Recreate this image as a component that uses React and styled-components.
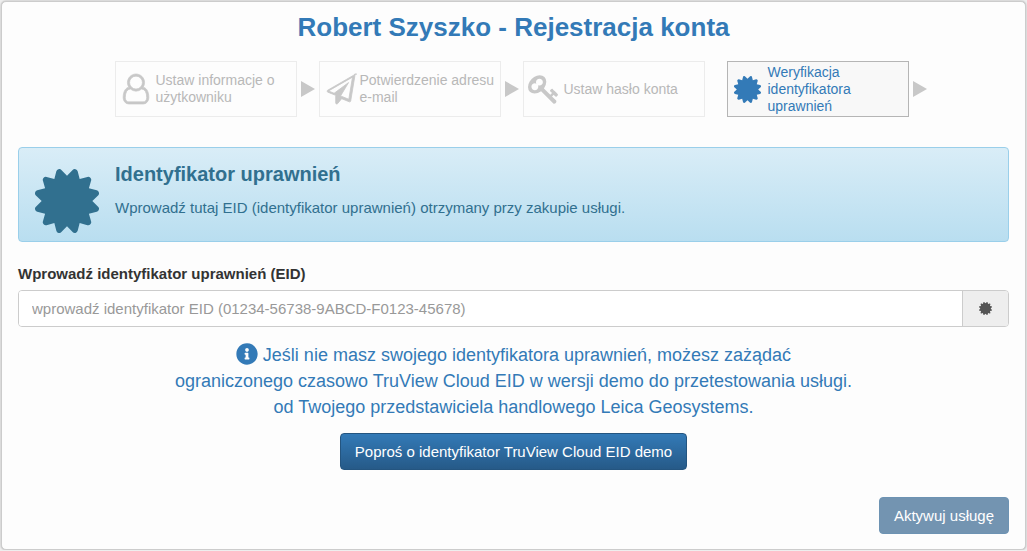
import React, { useState } from 'react';
import styled, { createGlobalStyle } from 'styled-components';
import { FaInfoCircle } from 'react-icons/fa';

const GlobalStyle = createGlobalStyle`
  * {
    box-sizing: border-box;
  }

  body {
    margin: 0;
    background: #eeeeee;
    color: #333;
    font-family: 'Liberation Sans', Arial, sans-serif;
    font-size: 15px;
    line-height: 20px;
  }
`;

const Panel = styled.main`
  margin: 1px 1px 0;
  padding: 8px 16px 15px;
  background: #fdfdfd;
  border: 1px solid #ccc;
  border-radius: 5px;
  box-shadow: 0 0 2px rgba(0, 0, 0, 0.3);
`;

const Title = styled.h1`
  margin: 0;
  color: #337ab7;
  font-size: 26px;
  line-height: 34px;
  text-align: center;
`;

const Steps = styled.ol`
  display: flex;
  justify-content: center;
  margin: 17px 0 30px;
  padding: 0 0 0 18px;
  list-style: none;
`;

const Step = styled.li`
  display: flex;
  align-items: center;
`;

const StepBox = styled.div`
  display: flex;
  align-items: center;
  width: 182px;
  height: 56px;
  padding-left: 6px;
  border: 1px solid ${(props) => (props.$active ? '#b5b5b5' : '#ececec')};
  background: ${(props) => (props.$active ? '#f8f8f8' : 'transparent')};
  color: ${(props) => (props.$active ? '#337ab7' : '#c8c8c8')};
`;

const StepIcon = styled.span`
  display: flex;
  flex: none;
  justify-content: center;
  width: 28px;
  margin-right: 6px;

  svg {
    flex: none;
  }
`;

const StepLabel = styled.span`
  color: ${(props) => (props.$active ? '#337ab7' : '#b8b8b8')};
  font-size: 14px;
  line-height: 17px;
`;

const Arrow = styled.span`
  width: 22px;
  padding-left: 4px;

  &::before {
    content: '';
    display: block;
    visibility: ${(props) => (props.$hidden ? 'hidden' : 'visible')};
    width: 0;
    border-left: 14px solid #c8c8c8;
    border-top: 8px solid transparent;
    border-bottom: 8px solid transparent;
  }
`;

const Info = styled.section`
  display: flex;
  align-items: flex-start;
  gap: 16px;
  padding: 14px 16px 8px;
  border: 1px solid #9acfea;
  border-radius: 4px;
  background: linear-gradient(to bottom, #d9edf7 0%, #b9def0 100%);
  color: #31708f;

  svg {
    flex: none;
    margin-top: 7px;
  }
`;

const InfoTitle = styled.h2`
  margin: 0 0 12px;
  font-size: 20px;
  line-height: 24px;
`;

const InfoText = styled.p`
  margin: 0;
`;

const Label = styled.label`
  display: block;
  margin: 22px 0 6px;
  font-weight: bold;
`;

const InputGroup = styled.div`
  display: flex;
  height: 37px;
  border: 1px solid #ccc;
  border-radius: 4px;
  overflow: hidden;
`;

const Input = styled.input`
  flex: 1;
  min-width: 0;
  padding: 0 13px;
  border: none;
  background: #fff;
  color: #555;
  font: inherit;

  &::placeholder {
    color: #999;
    opacity: 1;
  }
`;

const Addon = styled.span`
  display: flex;
  align-items: center;
  justify-content: center;
  width: 46px;
  border-left: 1px solid #ccc;
  background: #eee;
  color: #555;
`;

const Hint = styled.p`
  margin: 15px 0 13px;
  color: #337ab7;
  font-size: 18px;
  line-height: 26px;
  text-align: center;

  svg {
    margin-right: 5px;
    vertical-align: -4px;
  }
`;

const Actions = styled.div`
  display: flex;
  justify-content: ${(props) => props.$align};
`;

const Button = styled.button`
  height: 37px;
  padding: 0 14px;
  border: 1px solid #245580;
  border-radius: 4px;
  background: linear-gradient(to bottom, #337ab7 0%, #265a88 100%);
  color: #fff;
  font: inherit;
  cursor: pointer;

  &:disabled {
    border-color: #6d93b3;
    background: #7394b1;
    cursor: not-allowed;
  }
`;

const SubmitRow = styled(Actions)`
  margin-top: 27px;
`;

const UserIcon = () => (
  <svg width="26" height="30" viewBox="0 0 1536 1792" fill="currentColor" stroke="currentColor" strokeWidth="40" overflow="visible" aria-hidden="true">
    <path d="M1201 784q47 14 89.500 38t89 73 79.500 115.500 55 172 22 236.500q0 154-100 263.500t-241 109.500h-854q-141 0-241-109.500t-100-263.500q0-131 22-236.500t55-172 79.500-115.500 89-73 89.500-38q-79-125-79-272 0-104 40.500-198.500t109.500-163.500 163.500-109.500 198.500-40.500 198.500 40.500 163.500 109.500 109.500 163.500 40.500 198.500q0 147-79 272zm-433-656q-159 0-271.500 112.500t-112.500 271.500 112.500 271.500 271.500 112.500 271.500-112.500 112.500-271.500-112.500-271.500-271.500-112.500zm427 1536q88 0 150.500-71.500t62.500-173.500q0-239-78.500-377t-225.500-145q-145 127-336 127t-336-127q-147 7-225.500 145t-78.500 377q0 102 62.500 173.500t150.500 71.500h854z" />
  </svg>
);

const PlaneIcon = () => (
  <svg width="30" height="30" viewBox="0 0 1792 1792" fill="currentColor" stroke="currentColor" strokeWidth="50" overflow="visible" aria-hidden="true">
    <path d="M1764 11q33 24 27 64l-256 1536q-5 29-32 45-14 8-31 8-11 0-24-5l-453-185-242 295q-18 23-49 23-13 0-22-4-19-7-30.500-23.500t-11.500-36.500v-452l-472-193q-37-14-40-55-3-39 32-59l1664-960q15-9 32-9 20 0 36 11zm-342 1499l221-1323-1434 827 336 137 863-639-478 797z" />
  </svg>
);

const KeyIcon = () => (
  <svg width="32" height="32" viewBox="0 0 1792 1792" fill="currentColor" aria-hidden="true">
    <path d="M832 512q0-80-56-136t-136-56-136 56-56 136q0 42 19 83-41-19-83-19-80 0-136 56t-56 136 56 136 136 56 136-56 56-136q0-42-19-83 41 19 83 19 80 0 136-56t56-136zm851 704q0 17-49 66t-66 49q-9 0-28.500-16t-36.500-33-38.500-40-24.500-26l-96 96 220 220q28 28 28 68 0 42-39 81t-81 39q-40 0-68-28l-671-671q-176 131-365 131-163 0-265.500-102.500t-102.500-265.500q0-160 95-313t248-248 313-95q163 0 265.500 102.500t102.500 265.500q0 189-131 365l355 355 96-96q-3-3-26-24.500t-40-38.500-33-36.500-16-28.500q0-17 49-66t66-49q13 0 23 10 6 6 46 44.500t82 79.500 86.500 86 73 78 28.500 41z" />
  </svg>
);

const CertificateIcon = ({ size }) => (
  <svg width={size} height={size} viewBox="0 128 1536 1536" fill="currentColor" aria-hidden="true">
    <path d="M1376 896l138 135q30 28 20 70-12 41-52 51l-188 48 53 186q12 41-19 70-29 31-70 19l-186-53-48 188q-10 40-51 52-12 2-19 2-31 0-51-22l-135-138-135 138q-28 30-70 20-41-11-51-52l-48-188-186 53q-41 12-70-19-31-29-19-70l53-186-188-48q-40-10-52-51-10-42 20-70l138-135-138-135q-30-28-20-70 12-41 52-51l188-48-53-186q-12-41 19-70 29-31 70-19l186 53 48-188q10-41 51-51 41-12 70 19l135 139 135-139q29-30 70-19 41 10 51 51l48 188 186-53q41-12 70 19 31 29 19 70l-53 186 188 48q40 10 52 51 10 42-20 70z" />
  </svg>
);

const steps = [
  { label: 'Ustaw informacje o użytkowniku', icon: <UserIcon /> },
  { label: 'Potwierdzenie adresu e-mail', icon: <PlaneIcon /> },
  { label: 'Ustaw hasło konta', icon: <KeyIcon />, last: true },
  { label: 'Weryfikacja identyfikatora uprawnień', icon: <CertificateIcon size={27} />, active: true },
];

const App = () => {
  const [eid, setEid] = useState('');

  return (
    <>
      <GlobalStyle />
      <Panel>
        <Title>Robert Szyszko - Rejestracja konta</Title>
        <Steps>
          {steps.map((step) => (
            <Step key={step.label}>
              <StepBox $active={step.active}>
                <StepIcon>{step.icon}</StepIcon>
                <StepLabel $active={step.active}>{step.label}</StepLabel>
              </StepBox>
              <Arrow $hidden={step.last} />
            </Step>
          ))}
        </Steps>
        <Info>
          <CertificateIcon size={64} />
          <div>
            <InfoTitle>Identyfikator uprawnień</InfoTitle>
            <InfoText>
              Wprowadź tutaj EID (identyfikator uprawnień) otrzymany przy zakupie usługi.
            </InfoText>
          </div>
        </Info>
        <Label htmlFor="eid">Wprowadź identyfikator uprawnień (EID)</Label>
        <InputGroup>
          <Input
            id="eid"
            type="text"
            placeholder="wprowadź identyfikator EID (01234-56738-9ABCD-F0123-45678)"
            value={eid}
            onChange={(event) => setEid(event.target.value)}
          />
          <Addon>
            <CertificateIcon size={13} />
          </Addon>
        </InputGroup>
        <Hint>
          <FaInfoCircle size={22} />
          Jeśli nie masz swojego identyfikatora uprawnień, możesz zażądać
          <br />
          ograniczonego czasowo TruView Cloud EID w wersji demo do przetestowania usługi.
          <br />
          od Twojego przedstawiciela handlowego Leica Geosystems.
        </Hint>
        <Actions $align="center">
          <Button type="button">Poproś o identyfikator TruView Cloud EID demo</Button>
        </Actions>
        <SubmitRow $align="flex-end">
          <Button type="submit" disabled={!eid}>Aktywuj usługę</Button>
        </SubmitRow>
      </Panel>
    </>
  );
};

export default App;
